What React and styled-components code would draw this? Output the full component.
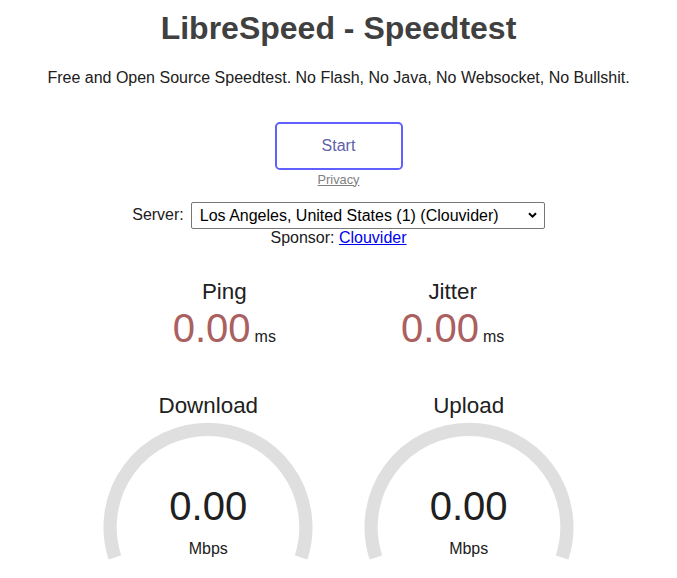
import React from 'react';
import styled, { createGlobalStyle } from 'styled-components';

const GlobalStyle = createGlobalStyle`
  html, body {
    margin: 0;
    padding: 0;
    border: none;
    background: #ffffff;
    color: #202020;
  }
  body {
    font-family: "Liberation Sans", Arial, sans-serif;
    text-align: center;
    overflow: hidden;
  }
`;

const Page = styled.div`
  display: flex;
  flex-direction: column;
  align-items: center;
  padding-top: 10px;
`;

const Title = styled.h1`
  margin: 0;
  font-size: 32px;
  line-height: 37px;
  font-weight: bold;
  color: #404040;
`;

const Subtitle = styled.p`
  margin: 22px 0 0;
  font-size: 16px;
  line-height: 18px;
`;

const StartButton = styled.button`
  margin-top: 35px;
  box-sizing: border-box;
  width: 128px;
  height: 48px;
  padding: 0;
  background: transparent;
  border: 2.4px solid #6060ff;
  border-radius: 4.8px;
  color: #6060aa;
  font-family: inherit;
  font-size: 16px;
  line-height: 43.2px;
  cursor: pointer;
`;

const PrivacyLink = styled.a`
  margin-top: 1.5px;
  font-size: 12.8px;
  line-height: 15px;
  color: #808080;
  text-decoration: underline;
`;

const ServerRow = styled.div`
  margin-top: 15px;
  display: flex;
  align-items: center;
  justify-content: center;
  gap: 7px;
  font-size: 16px;
`;

const SelectWrap = styled.div`
  position: relative;
  display: flex;

  & > svg {
    position: absolute;
    right: 8px;
    top: 50%;
    margin-top: -3px;
    pointer-events: none;
  }
`;

const ServerSelect = styled.select`
  appearance: none;
  box-sizing: border-box;
  width: 354px;
  height: 27px;
  font-family: inherit;
  font-size: 16px;
  padding: 0 24px 0 8px;
  margin: 0;
  color: #000;
  background: #fff;
  border: 1px solid #767676;
  border-radius: 2px;
`;

const Chevron = () => (
  <svg width="9" height="6" viewBox="0 0 9 6">
    <path d="M1 1.2 L4.5 4.6 L8 1.2" fill="none" stroke="#000" strokeWidth="2" />
  </svg>
);

const SponsorLine = styled.div`
  font-size: 16px;
  line-height: 18px;

  a {
    color: #0000ee;
    text-decoration: underline;
  }
`;

const TestGroup = styled.div`
  display: flex;
  justify-content: center;
  gap: 4.4px;
  margin-top: ${(p) => p.$top || 0}px;
`;

const SmallArea = styled.div`
  width: 224px;
  height: 112px;
  display: flex;
  flex-direction: column;
  align-items: center;
`;

const TestName = styled.div`
  font-size: 22.4px;
  line-height: 26px;
`;

const ValueLine = styled.div`
  display: flex;
  align-items: baseline;
  justify-content: center;
  gap: 4px;
`;

const MeterText = styled.div`
  font-size: 40px;
  line-height: 46px;
  color: ${(p) => p.$color || '#202020'};
`;

const Unit = styled.div`
  font-size: 16px;
  line-height: 18.4px;
`;

const GaugeArea = styled.div`
  position: relative;
  width: 256px;
  height: 200px;
  box-sizing: border-box;
  padding: 2.24px 0 32px;
  display: flex;
  flex-direction: column;
  align-items: center;

  & > svg {
    position: absolute;
    top: 0;
    left: 0;
  }

  & > div {
    position: relative;
  }
`;

const GaugeValue = styled(MeterText)`
  margin-top: auto;
  margin-bottom: 11.6px;
`;

// same geometry as the canvas meter: centre (w/2, h-58s), r = h/1.8 - lw
const Gauge = () => {
  const w = 256;
  const h = 200;
  const s = h * 0.0055;
  const lw = 12 * s;
  const cx = w / 2;
  const cy = h - 58 * s;
  const r = h / 1.8 - lw;
  const a0 = -Math.PI * 1.1;
  const a1 = Math.PI * 0.1;
  const x0 = cx + r * Math.cos(a0);
  const y0 = cy + r * Math.sin(a0);
  const x1 = cx + r * Math.cos(a1);
  const y1 = cy + r * Math.sin(a1);
  return (
    <svg width={w} height={h} viewBox={`0 0 ${w} ${h}`}>
      <path
        d={`M ${x0} ${y0} A ${r} ${r} 0 1 1 ${x1} ${y1}`}
        fill="none"
        stroke="rgba(128,128,128,0.25)"
        strokeWidth={lw}
      />
    </svg>
  );
};

const smallTests = [
  { name: 'Ping', unit: 'ms' },
  { name: 'Jitter', unit: 'ms' },
];

const meterTests = [
  { name: 'Download', unit: 'Mbps' },
  { name: 'Upload', unit: 'Mbps' },
];

export default function App() {
  return (
    <>
      <GlobalStyle />
      <Page>
        <Title>LibreSpeed - Speedtest</Title>
        <Subtitle>
          Free and Open Source Speedtest. No Flash, No Java, No Websocket, No Bullshit.
        </Subtitle>
        <StartButton>Start</StartButton>
        <PrivacyLink href="#">Privacy</PrivacyLink>
        <ServerRow>
          <span>Server:</span>
          <SelectWrap>
            <ServerSelect defaultValue="la">
              <option value="la">Los Angeles, United States (1) (Clouvider)</option>
            </ServerSelect>
            <Chevron />
          </SelectWrap>
        </ServerRow>
        <SponsorLine>
          Sponsor: <a href="#">Clouvider</a>
        </SponsorLine>
        <TestGroup $top={32}>
          {smallTests.map((t) => (
            <SmallArea key={t.name}>
              <TestName>{t.name}</TestName>
              <ValueLine>
                <MeterText $color="#aa6060">0.00</MeterText>
                <Unit>{t.unit}</Unit>
              </ValueLine>
            </SmallArea>
          ))}
        </TestGroup>
        <TestGroup>
          {meterTests.map((t) => (
            <GaugeArea key={t.name}>
              <Gauge />
              <TestName>{t.name}</TestName>
              <GaugeValue>0.00</GaugeValue>
              <Unit>{t.unit}</Unit>
            </GaugeArea>
          ))}
        </TestGroup>
      </Page>
    </>
  );
}
